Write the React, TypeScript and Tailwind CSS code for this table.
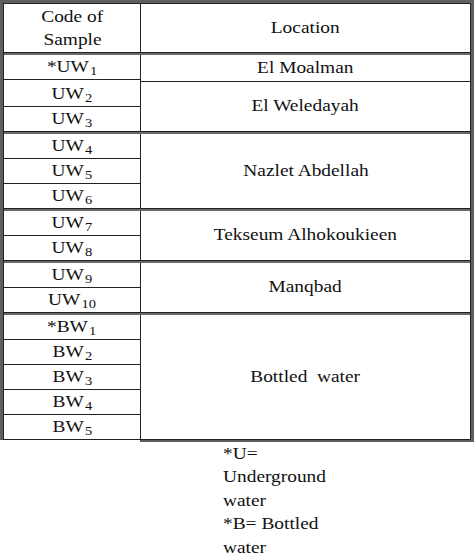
import React from "react";

type Code = [string, string];
type Group = { codes: Code[]; loc: string; sep: boolean };

const groups: Group[] = [
  { codes: [["*UW", "1"]], loc: "El Moalman", sep: false },
  { codes: [["UW", "2"], ["UW", "3"]], loc: "El Weledayah", sep: true },
  { codes: [["UW", "4"], ["UW", "5"], ["UW", "6"]], loc: "Nazlet Abdellah", sep: true },
  { codes: [["UW", "7"], ["UW", "8"]], loc: "Tekseum Alhokoukieen", sep: true },
  { codes: [["UW", "9"], ["UW", "10"]], loc: "Manqbad", sep: true },
  {
    codes: [["*BW", "1"], ["BW", "2"], ["BW", "3"], ["BW", "4"], ["BW", "5"]],
    loc: "Bottled\u00a0\u00a0water",
    sep: false,
  },
];

function T({ children }: { children: React.ReactNode }) {
  return <span className="inline-block scale-x-[1.14] whitespace-nowrap">{children}</span>;
}

export default function App() {
  return (
    <div className="w-[474px] h-[553px] bg-white [font-family:'Liberation_Serif','Times_New_Roman','DejaVu_Serif',serif] text-[17px] text-[#111] overflow-hidden">
      <div className="border-x-[3px] border-t-[3px] border-[#5f5f5f]">
        <div className="border-x border-t border-[#222]">
          {/* header */}
          <div className="flex h-[49px] border-b border-[#222]">
            <div className="w-[137px] border-r border-[#222] flex flex-col items-center justify-center leading-[23px]">
              <T>Code of</T>
              <T>Sample</T>
            </div>
            <div className="flex-1 flex items-center justify-center">
              <T>Location</T>
            </div>
          </div>
          <div className="h-[2px] bg-[#6a6a6a]" />
          {groups.map((g, gi) => (
            <div key={gi}>
              <div className="flex">
                <div className="w-[137px] border-r border-[#222] flex flex-col">
                  {g.codes.map(([a, b], ci) => (
                    <div
                      key={ci}
                      className="h-[25px] border-b border-[#222] flex items-center justify-center"
                    >
                      <T>
                        {a}
                        <sub className="ml-[1px]">{b}</sub>
                      </T>
                    </div>
                  ))}
                </div>
                <div className="flex-1 border-b border-[#222] flex items-center justify-center">
                  <T>{g.loc}</T>
                </div>
              </div>
              {g.sep && <div className="h-[2px] bg-[#6a6a6a]" />}
            </div>
          ))}
        </div>
      </div>
      <div className="ml-[140px] h-[2px] bg-[#5f5f5f]" />
      <div className="ml-[223px] leading-[23.5px] flex flex-col items-start">
        <span className="inline-block origin-left scale-x-[1.14] whitespace-nowrap">*U=</span>
        <span className="inline-block origin-left scale-x-[1.14] whitespace-nowrap">Underground</span>
        <span className="inline-block origin-left scale-x-[1.14] whitespace-nowrap">water</span>
        <span className="inline-block origin-left scale-x-[1.14] whitespace-nowrap">*B= Bottled</span>
        <span className="inline-block origin-left scale-x-[1.14] whitespace-nowrap">water</span>
      </div>
    </div>
  );
}
